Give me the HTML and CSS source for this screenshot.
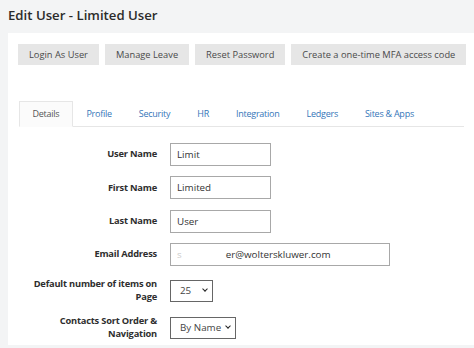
FILE: index.html
```html
<!DOCTYPE html>
<html>
	<head>
		<meta charset="UTF-8">
		<title>Edit User</title>
		<link rel="stylesheet" href="styles.css">
	</head>

	<body>
		<h1 class="page-title">Edit User - Limited User</h1>
		<main class="panel">
			<div class="actions">
				<button class="btn">Login As User</button>
				<button class="btn">Manage Leave</button>
				<button class="btn">Reset Password</button>
				<button class="btn">Create a one-time MFA access code</button>
			</div>

			<ul class="tabs">
				<li class="tab active">Details</li>
				<li class="tab">Profile</li>
				<li class="tab">Security</li>
				<li class="tab">HR</li>
				<li class="tab">Integration</li>
				<li class="tab">Ledgers</li>
				<li class="tab">Sites &amp; Apps</li>
			</ul>

			<form class="form">
				<div class="row">
					<label class="label">User Name</label>
					<input class="field" type="text" value="Limit">
				</div>
				<div class="row">
					<label class="label">First Name</label>
					<input class="field" type="text" value="Limited">
				</div>
				<div class="row">
					<label class="label">Last Name</label>
					<input class="field" type="text" value="User">
				</div>
				<div class="row">
					<label class="label">Email Address</label>
					<div class="field wide"><span class="blur">s</span>er@wolterskluwer.com</div>
				</div>
				<div class="row tall">
					<label class="label">Default number of items on Page</label>
					<div class="select small">25 <span class="caret"></span></div>
				</div>
				<div class="row tall">
					<label class="label">Contacts Sort Order &amp; Navigation</label>
					<div class="select">By Name <span class="caret"></span></div>
				</div>
			</form>
		</main>
	</body>

</html>
```

FILE: styles.css
```css
body {
	margin: 0;
	background-color: #f3f4f5;
	font-family: "Open Sans", "Noto Sans", sans-serif;
	color: #333;
	overflow: hidden;
}

.page-title {
	margin: 0;
	padding: 0 8px;
	height: 33px;
	line-height: 31px;
	font-size: 13.2px;
	font-weight: 600;
	color: #2b2b2b;
}

.panel {
	margin-left: 8px;
	background-color: #fff;
	padding: 11px 10px 0;
	height: 301px;
}

.actions {
	display: flex;
	gap: 6px;
}

.btn {
	flex-shrink: 0;
	white-space: nowrap;
	height: 21px;
	padding: 0 11px;
	border: none;
	background-color: #e6e6e6;
	color: #4a4a4a;
	font-family: inherit;
	font-size: 9.3px;
}

.tabs {
	display: flex;
	list-style: none;
	margin: 36px 0 0 1px;
	padding: 0;
	border-bottom: 1px solid #e6e6e6;
}

.tab {
	white-space: nowrap;
	height: 24px;
	line-height: 24px;
	padding: 0 12.5px;
	font-size: 9px;
	letter-spacing: -0.25px;
	color: #3576b9;
	border: 1px solid transparent;
	border-bottom: none;
	margin-bottom: -1px;
}

.tab.active {
	color: #555;
	background-color: #fbfbfb;
	border-color: #e6e6e6;
	border-bottom: 1px solid #fbfbfb;
}

.form {
	margin-top: 16px;
	display: flex;
	flex-direction: column;
	gap: 10.3px;
}

.row {
	display: flex;
	align-items: center;
	gap: 13px;
}

.row.tall {
	margin-top: 2px;
}

.label {
	flex-shrink: 0;
	width: 139px;
	text-align: right;
	font-size: 9.3px;
	font-weight: 700;
	letter-spacing: -0.2px;
	line-height: 12.5px;
	color: #2e2e2e;
}

.field {
	box-sizing: border-box;
	width: 101px;
	height: 23px;
	padding: 0 6px;
	border: 1px solid #a8a8a8;
	font-family: inherit;
	font-size: 9.8px;
	color: #333;
	line-height: 21px;
}

.field.wide {
	width: 220px;
}

.blur {
	color: #ccc;
	margin-right: 44px;
}

.select {
	box-sizing: border-box;
	flex-shrink: 0;
	white-space: nowrap;
	width: 66px;
	height: 22px;
	padding: 0 5px 0 9px;
	border: 1px solid #666;
	font-size: 9.8px;
	line-height: 20px;
	color: #444;
	display: flex;
	justify-content: space-between;
	align-items: center;
}

.select.small {
	width: 43px;
}

.caret {
	width: 3px;
	height: 3px;
	border-right: 1.5px solid #222;
	border-bottom: 1.5px solid #222;
	transform: rotate(45deg);
	margin-top: -3px;
}
```
